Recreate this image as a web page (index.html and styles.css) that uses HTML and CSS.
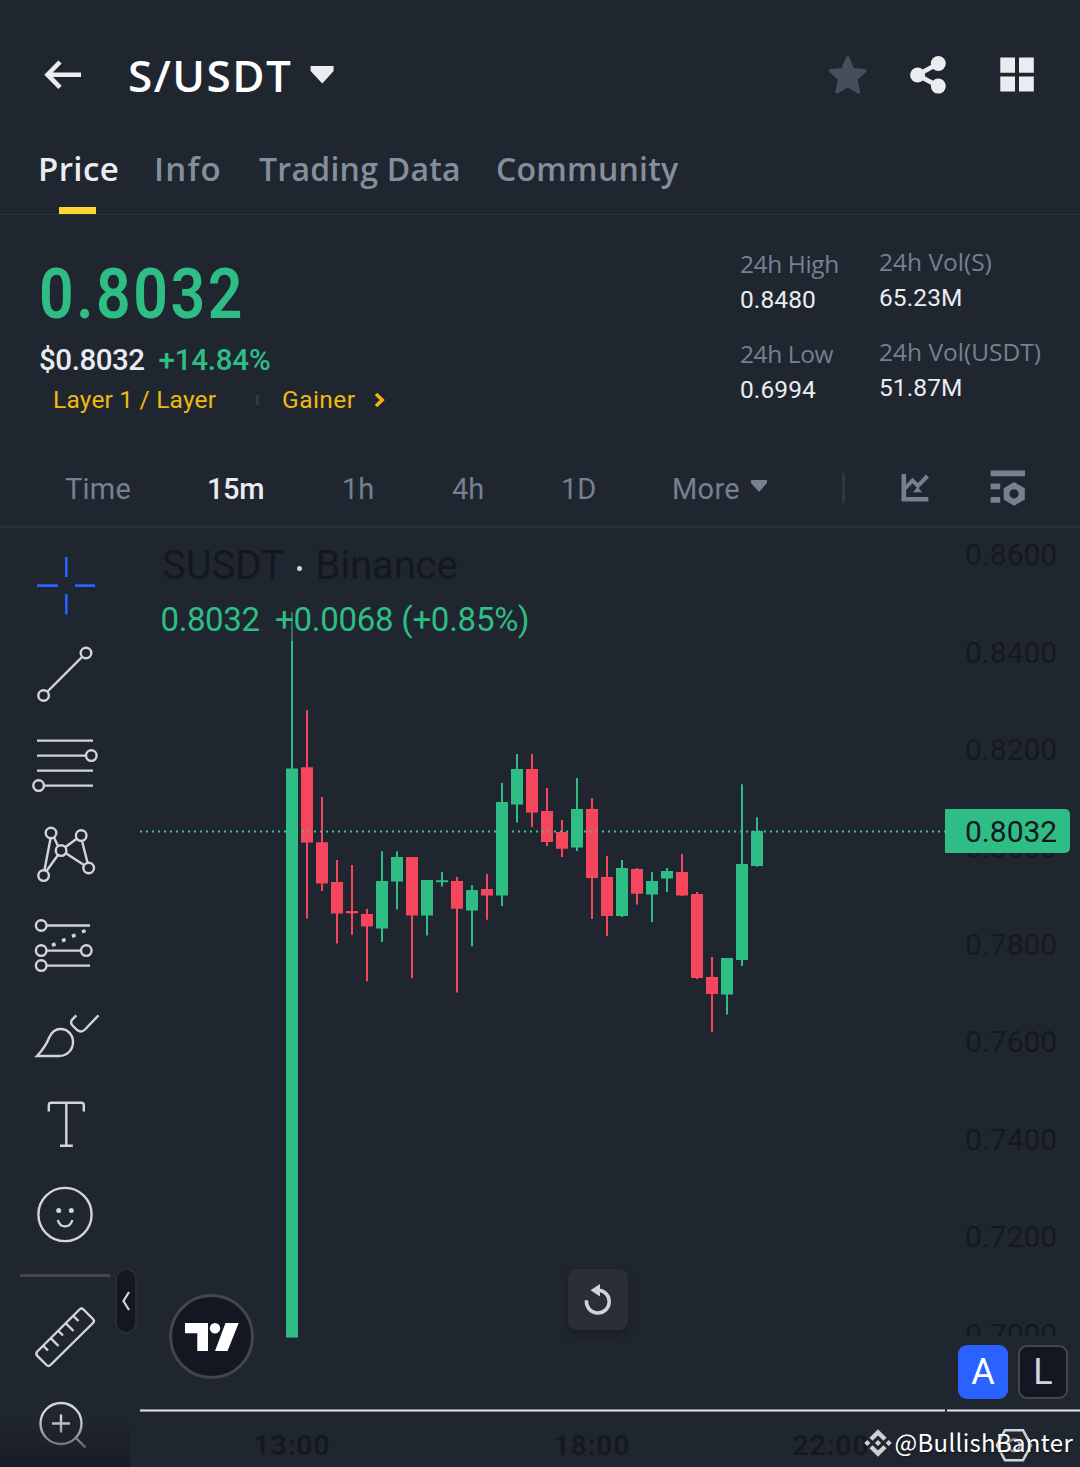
FILE: index.html
```html
<!DOCTYPE html>
<html lang="en">
<head>
<meta charset="utf-8">
<title>S/USDT</title>
<link rel="stylesheet" href="styles.css">
</head>
<body>
<main class="app">
  <header class="header">
    <svg class="back" width="38" height="32" viewBox="44 59 38 32"><path d="M81 74.7H48M60 62 47.5 74.7 60 87.4" fill="none" stroke="#eaecef" stroke-width="4.6"/></svg>
    <h1 class="pair">S/USDT</h1>
    <svg class="pair-caret" width="24" height="20" viewBox="310 64.5 24 20"><path d="M310.600 65.500H333.600V70.500L322.300 83 310.600 70.500Z" fill="#eaecef"/></svg>
    <svg class="star" width="40" height="40" viewBox="828 55.500 40 40"><path d="M847.700 58.500 852.600 70.200 864.800 71.300 855.600 79.800 858.300 92.200 847.700 86 837.100 92.200 839.800 79.800 830.600 71.300 842.800 70.200Z" fill="#474d5a" stroke="#474d5a" stroke-width="3.600" stroke-linejoin="round"/></svg>
    <svg class="share" width="38" height="40" viewBox="909 54.500 38 40"><path d="M938.300 63 917.500 74.500 938.300 85.600" fill="none" stroke="#eaecef" stroke-width="4.600"/><g fill="#eaecef"><circle cx="917.600" cy="74.500" r="7.500"/><circle cx="938.300" cy="63" r="7.500"/><circle cx="938.300" cy="85.600" r="7.500"/></g></svg>
    <svg class="apps" width="34" height="36" viewBox="1000 57 34 36"><path d="M1000.300 57.400h14.700v15.400h-14.700zM1019 57.400h14.800v15.400H1019zM1000.300 76.400h14.700v15.200h-14.700zM1019 76.400h14.800v15.200H1019z" fill="#eaecef"/></svg>
  </header>

  <nav class="tabs">
    <span class="tab tab-active">Price</span>
    <span class="tab tab-info">Info</span>
    <span class="tab">Trading Data</span>
    <span class="tab">Community</span>
  </nav>

  <section class="summary">
    <div class="quote">
      <div class="last"><span class="last-value">0.8032</span></div>
      <div class="fiat"><span class="usd">$0.8032</span><span class="change">+14.84%</span></div>
      <div class="tags"><span class="tag">Layer 1 / Layer</span><i class="tag-sep"></i><span class="tag tag-gainer">Gainer</span><svg class="tag-arrow" width="11" height="16" viewBox="0 0 11 16"><path d="M2 2 8.300 8 2 14" fill="none" stroke="#f0b90b" stroke-width="3.400"/></svg></div>
    </div>
    <div class="stats">
      <div class="stat-col">
        <div class="label">24h High</div><div class="value">0.8480</div>
        <div class="label second">24h Low</div><div class="value">0.6994</div>
      </div>
      <div class="stat-col stat-col-vol">
        <div class="label">24h Vol(S)</div><div class="value">65.23M</div>
        <div class="label second">24h Vol(USDT)</div><div class="value">51.87M</div>
      </div>
    </div>
  </section>

  <nav class="intervals">
    <span class="iv-time">Time</span>
    <span class="iv-active">15m</span>
    <span>1h</span>
    <span>4h</span>
    <span>1D</span>
    <span class="iv-more">More<svg class="more-caret" width="18" height="14" viewBox="0 0 18 14"><path d="M1 1H17V4L9 13 1 4Z" fill="#76808f"/></svg></span>
    <i class="iv-sep"></i>
    <svg width="28" height="30" viewBox="901 473.500 28 30"><path d="M903.800 473.500V498.800H928.300" fill="none" stroke="#76808f" stroke-width="4.600"/><path d="M905 488 912.500 480 918 485.500 927.500 475.500" fill="none" stroke="#76808f" stroke-width="4"/><path d="M917.500 486 922 491.800H913Z" fill="#76808f"/></svg>
    <svg class="iv-settings" width="36" height="38" viewBox="990 470 36 38"><path d="M990.600 470.500h34.400v5.700h-34.400zM990.600 483.500h9.600v5.700h-9.600zM990.600 497h9.600v5.700h-9.600z" fill="#76808f"/><path fill-rule="evenodd" d="M1014 482 1024.800 488.200V499.500L1014 505.700 1003.700 499.500V488.200ZM1014 489.200a4.600 4.600 0 1 0 .1 0Z" fill="#76808f"/></svg>
  </nav>

  <section class="chart">
    <aside class="toolbar">
      <svg class="tool tool-on" viewBox="0 540 140 90"><path d="M66.300 557V577M66.300 594V614.500M37 585.600H58M75 585.600H95"/></svg>
      <svg class="tool" viewBox="0 630 140 90"><path d="M82 657 47.500 691.500"/><circle cx="86" cy="653" r="5.300"/><circle cx="43.600" cy="695.500" r="5.300"/></svg>
      <svg class="tool" viewBox="0 720 140 90"><path d="M37 740.600H93M37 755.600H85.500M37 770.600H93M44 785.600H93"/><circle cx="91.300" cy="755.600" r="5.300"/><circle cx="38.600" cy="785.600" r="5.300"/></svg>
      <svg class="tool" viewBox="0 810 140 90"><path d="M50.500 838.500 44.500 870M54 837.500 58 846M65.500 847 77 838.500M58 855 46.500 871M65.500 853 84 865M82 841 87.500 862.500"/><circle cx="51" cy="833" r="5.300"/><circle cx="81.200" cy="835.600" r="5.300"/><circle cx="61.100" cy="850.600" r="5.300"/><circle cx="43.600" cy="875.600" r="5.300"/><circle cx="88.700" cy="868" r="5.300"/></svg>
      <svg class="tool" viewBox="0 900 140 90"><path d="M47 925.500H90M47 950.600H80M47 965.600H90"/><path d="M52 945.400 55.500 943.900M62 940.900 65.500 939.400M72 936.400 75.500 934.900M82 932 85.500 930.500" stroke-width="3.400"/><circle cx="41.200" cy="925.500" r="5.300"/><circle cx="41.200" cy="950.600" r="5.300"/><circle cx="41.200" cy="965.600" r="5.300"/><circle cx="86.300" cy="950.600" r="5.300"/></svg>
      <svg class="tool" viewBox="0 990 140 90"><path d="M37 1056C44.500 1048 47 1043 49 1038 52 1031 56 1029 60.500 1029 68 1029 73 1035 73 1042 73 1050 67 1056 59 1056Z"/><path d="M76.300 1015.300 72 1019.800Q70 1022.500 72.500 1025.500L76.500 1029.500Q81 1033.500 85 1029.500L98.500 1015.300"/></svg>
      <svg class="tool" viewBox="0 1080 140 90"><path d="M48.800 1111.500V1105Q48.800 1102.800 51.500 1102.800H81Q83.800 1102.800 83.800 1105V1111.500M66.300 1103V1145.700M60 1145.700H72.800"/></svg>
      <svg class="tool" viewBox="0 1170 140 90"><circle cx="65" cy="1214.500" r="26.600"/><path d="M57.800 1220C60 1228.500 70 1228.500 72.400 1220"/><g class="solid"><circle cx="58.700" cy="1210.600" r="2.500"/><circle cx="71.300" cy="1210.600" r="2.500"/></g></svg>
      <i class="tool-rule"></i>
      <svg class="tool" viewBox="0 1292 140 90"><path d="M37.300 1351.500 79.500 1309.500Q81.500 1307.500 83.500 1309.500L93 1319Q95 1321 93 1323L50.500 1365Q48.500 1367 46.500 1365L37.300 1355.800Q35.300 1353.600 37.300 1351.500ZM43.500 1346 48 1350.500M51 1338.500 58.500 1346M58.500 1331 63 1335.500M66 1323.500 73.500 1331M73.500 1316 78.500 1321"/></svg>
      <svg class="tool tool-last" viewBox="0 1382 140 85"><circle cx="61" cy="1423.500" r="20.500"/><path d="M61 1414.500V1432.500M52 1423.500H70M76 1438 85.500 1447.500"/></svg>
      <i class="toolbar-fade"></i>
      <span class="collapse"><svg width="8" height="20" viewBox="0 0 8 20"><path d="M7 1 1.500 10 7 19" fill="none" stroke="#d1d4dc" stroke-width="2.200"/></svg></span>
    </aside>

    <div class="plot">
      <svg class="candles" width="805" height="881" viewBox="140 528 805 881">
        <path class="up wick faint" d="M292 612.500V641"/>
        <path class="up wick" d="M292 641V769M382 851.300V942M397 851.300V909.500M427 880V935.500M442 872V886.500M472 885V946.300M502 783V906M517 754V822.500M577 778V851M622 860V917M652 872V922M667 868V892M727 958V1014.500M742 784.200V966M757 817.300V866.700"/>
        <path class="down wick" d="M307 710.300V918.500M322 797V891M337 860V943.500M352 865V934.700M367 909V981.300M412 857V978.300M457 877V992.500M487 874V919.700M532 754V827M547 788V846M562 820V857M592 798V919M607 856V936M637 868V904.500M682 854V896M697 892V979M712 957V1032"/>
        <path class="up body" d="M292 768.400V1337.400M382 881V928.400M397 857V881.500M427 880V915.500M442 880.200V882.300M472 890V910.500M502 802V895.500M517 769V804.500M577 809V847.500M622 868V916M652 881V894.600M667 871V878.600M727 958V994.500M742 864V960M757 831V866"/>
        <path class="down body" d="M307 767.200V842.500M322 842.200V883.500M337 882V913.600M352 911V913.300M367 914V926.600M412 857V915.500M457 881V908.700M487 889V895.600M532 769V812.600M547 811V842M562 832V848.700M592 809V878M607 877V916M637 869V893.700M682 872V895.600M697 894V978M712 977V994"/>
        <path class="last-line" d="M140 831.400H945"/>
      </svg>
      <div class="legend">
        <div class="legend-title"><span>SUSDT</span><i class="legend-dot"></i><span>Binance</span></div>
        <div class="legend-values"><span class="legend-last">0.8032</span><span class="legend-diff">+0.0068 (+0.85%)</span></div>
      </div>
      <span class="tv-logo"><svg width="54" height="28" viewBox="185 1324 54 28"><path d="M185 1324H208V1352H197.300V1334.200H185ZM225.500 1324H238.700L227.500 1352H215Z" fill="#fff"/><circle cx="215" cy="1329.300" r="5.200" fill="#fff"/></svg></span>
      <span class="reset"><svg width="30" height="34" viewBox="583 1284 30 34"><path d="M586.500 1301.300A11.400 11.400 0 1 0 598 1291.200" fill="none" stroke="#d1d4dc" stroke-width="3.500"/><path d="M600 1285V1297.500L590.500 1291.200Z" fill="#d1d4dc"/></svg></span>
    </div>

    <div class="price-axis">
      <div class="ticks"><span>0.8600</span><span>0.8400</span><span>0.8200</span><span>0.8000</span><span>0.7800</span><span>0.7600</span><span>0.7400</span><span>0.7200</span><span>0.7000</span></div>
      <span class="last-tag">0.8032</span>
      <div class="scale-buttons"><span class="scale-auto">A</span><span class="scale-log">L</span></div>
    </div>

    <div class="time-axis"><span>13:00</span><span>18:00</span><span class="t22">22:00</span></div>
    <div class="axis-corner"><svg width="38" height="36" viewBox="995 1427 38 36"><path d="M1005 1430.200H1023L1031 1445.300 1023 1460.300H1005L997 1445.300Z" fill="none" stroke="#d1d4dc" stroke-width="2.600"/><circle cx="1014" cy="1445.300" r="5.800" fill="none" stroke="#9fa3ad" stroke-width="2.500"/></svg></div>
  </section>

  <div class="watermark">
    <svg width="28" height="28" viewBox="-14 -14 28 28"><path fill="#cfcfcf" d="M0-13.800 8.600-5.300 5.400-2.200 0-7.500-5.400-2.200-8.600-5.300ZM0 13.800 8.600 5.300 5.400 2.200 0 7.500-5.400 2.200-8.600 5.300ZM-10.700-3.100-7.600 0-10.700 3.100-13.800 0ZM10.700-3.100 13.800 0 10.700 3.100 7.600 0ZM0-3.100 3.100 0 0 3.100-3.100 0Z"/></svg>
    <span>@BullishBanter</span>
  </div>
</main>
</body>
</html>
```
FILE: styles.css
```css
* { box-sizing: border-box; }

body {
  margin: 0;
  background: #202630;
  font-family: Roboto, "Liberation Sans", sans-serif;
  color: #eaecef;
}

svg { display: block; flex: none; }

.app {
  position: relative;
  width: 1080px;
  height: 1467px;
  overflow: hidden;
  display: flex;
  flex-direction: column;
}

/* header */
.header {
  height: 149px;
  padding: 0 46px 0 44px;
  display: flex;
  align-items: center;
  flex: none;
}
.pair {
  margin: 0 0 0 46px;
  width: 182px;
  font: 600 44px/60px "Open Sans", sans-serif;
  letter-spacing: 1.5px;
  color: #fff;
}
.star { margin-left: auto; }
.share { margin-left: 41px; }
.apps { margin-left: 53px; }

/* tabs */
.tabs {
  height: 66px;
  padding-left: 38px;
  display: grid;
  grid-template-columns: 116px 105px 237px 1fr;
  border-bottom: 1px solid #2b313b;
  flex: none;
  font: 600 32px/40px "Open Sans", sans-serif;
  letter-spacing: 0.25px;
  color: #848e9c;
}
.tab-active {
  color: #eaecef;
  font-size: 33px;
  letter-spacing: 0.4px;
  display: flex;
  flex-direction: column;
}
.tab-active::after {
  content: "";
  width: 37px;
  height: 7px;
  margin: 18px 0 0 21px;
  background: #fcd535;
}
.tab-info { font-size: 33px; letter-spacing: 1.2px; }

/* price summary */
.summary {
  height: 237px;
  display: flex;
  flex: none;
}
.quote { width: 740px; padding: 43px 0 0 39px; }
.last {
  font-size: 71px;
  font-weight: 600;
  line-height: 72px;
  color: #2ebd85;
}
.last-value {
  display: inline-block;
  letter-spacing: 3px;
  transform: scaleX(0.855);
  transform-origin: left;
}
.fiat {
  margin-top: 10px;
  display: flex;
  font-size: 29.5px;
  font-weight: 500;
  line-height: 40px;
}
.usd { width: 119.5px; letter-spacing: -0.45px; }
.change { color: #2ebd85; letter-spacing: -0.2px; }
.tags {
  display: flex;
  align-items: center;
  padding-left: 14px;
  font-size: 24.5px;
  line-height: 39px;
  color: #f0b90b;
}
.tag { letter-spacing: 0.2px; width: 203px; }
.tag-sep { width: 3px; height: 10px; background: #323944; }
.tag-gainer { margin-left: 23px; width: 92px; letter-spacing: 0.45px; }

.stats { display: flex; }
.stat-col { width: 139px; padding-top: 31px; letter-spacing: -0.4px; }
.stat-col-vol { padding-top: 29px; width: 190px; letter-spacing: 0; white-space: nowrap; }
.label {
  font: 24.5px/36px "Open Sans", sans-serif;
  color: #76808f;
}
.second { margin-top: 18px; }
.value { font-size: 24.5px; line-height: 36px; letter-spacing: 0.1px; }

/* interval selector */
.intervals {
  height: 76px;
  display: grid;
  grid-template-columns: 142px 135px 110px 109px 111px 170px 59px 89px 36px;
  align-items: center;
  padding-left: 65px;
  border-bottom: 3px solid #262c38;
  flex: none;
  font-size: 29px;
  line-height: 40px;
  color: #76808f;
}
.iv-time { letter-spacing: 0.2px; }
.iv-active { color: #eaecef; font-weight: 500; letter-spacing: -0.4px; }
.iv-more { display: flex; align-items: center; gap: 10px; letter-spacing: 0.3px; }
.more-caret { margin-bottom: 5px; }
.iv-sep { width: 3px; height: 30px; margin-bottom: 2px; background: #2f3641; }

/* chart area */
.chart {
  height: 939px;
  display: grid;
  grid-template-columns: 140px 805px 135px;
  grid-template-rows: 881px 58px;
}

.toolbar {
  position: relative;
  grid-row: 1 / 3;
  padding-top: 12px;
  display: flex;
  flex-direction: column;
}
.tool {
  width: 140px;
  height: 90px;
  fill: none;
  stroke: #d1d4dc;
  stroke-width: 2.4;
}
.tool-on { stroke: #2962ff; stroke-width: 2.6; }
.tool-last { height: 85px; }
.solid { fill: #d1d4dc; stroke: none; }
.tool-rule {
  width: 90px;
  height: 3px;
  margin: 14px 0 15px 20px;
  background: #434651;
  flex: none;
}
.toolbar-fade {
  position: absolute;
  left: 0;
  bottom: 0;
  width: 130px;
  height: 50px;
  background: linear-gradient(rgba(23, 27, 38, 0), rgba(23, 27, 38, 0.95));
}
.collapse {
  position: absolute;
  left: 115px;
  top: 740px;
  width: 22px;
  height: 66px;
  display: flex;
  align-items: center;
  justify-content: center;
  border: 2px solid #282c38;
  border-radius: 11px;
  background: #131722;
}

.plot { position: relative; }
.wick { stroke-width: 2; }
.body { stroke-width: 12; }
.up { stroke: #2ebd85; }
.down { stroke: #f6465d; }
.faint { opacity: 0.55; }
.last-line {
  stroke: #3cbd8b;
  stroke-width: 2;
  stroke-dasharray: 2 4;
}

.legend {
  position: absolute;
  left: 22px;
  top: 13px;
}
.legend-title {
  display: flex;
  align-items: center;
  font-size: 40px;
  line-height: 50px;
  letter-spacing: -0.1px;
  color: #131722;
}
.legend-dot {
  width: 5px;
  height: 5px;
  margin: 5px 14px 0 12px;
  border-radius: 50%;
  background: #d1d4dc;
}
.legend-values {
  display: flex;
  margin-top: 4px;
  font-size: 33px;
  line-height: 50px;
  letter-spacing: -0.25px;
  color: #2ebd85;
}
.legend-last { width: 114.5px; letter-spacing: -0.4px; margin-left: -1.5px; }

.tv-logo {
  position: absolute;
  left: 29px;
  top: 766px;
  width: 85px;
  height: 85px;
  padding-top: 1px;
  display: flex;
  align-items: center;
  justify-content: center;
  border: 3px solid #434651;
  border-radius: 50%;
  background: #131722;
}
.reset {
  position: absolute;
  left: 428px;
  top: 741px;
  width: 60px;
  height: 61px;
  display: flex;
  align-items: center;
  justify-content: center;
  border-radius: 9px;
  background: #2a2e39;
  box-shadow: 0 5px 10px rgba(15, 18, 28, 0.45);
}

.price-axis {
  position: relative;
  font-size: 30px;
  line-height: 40px;
  color: #141823;
}
.ticks {
  height: 807.5px;
  padding: 7.4px 0 0 20px;
  overflow: hidden;
  display: flex;
  flex-direction: column;
  gap: 57.4px;
}
.ticks span { flex: none; }
.last-tag {
  position: absolute;
  left: 0;
  top: 281px;
  width: 125px;
  height: 44px;
  padding-left: 20px;
  line-height: 46px;
  border-radius: 0 5px 5px 0;
  background: #2ebd85;
  color: #131722;
}
.scale-buttons {
  display: flex;
  gap: 10px;
  margin-top: 9.5px;
  padding-left: 13px;
  font-size: 36px;
  line-height: 55px;
  text-align: center;
}
.scale-auto, .scale-log {
  width: 50px;
  height: 54px;
  border-radius: 9px;
}
.scale-auto { background: #2962ff; color: #fff; }
.scale-log {
  background: #131722;
  border: 2px solid #434651;
  color: #d1d4dc;
  line-height: 51px;
}

.time-axis, .axis-corner {
  background: linear-gradient(#8a8d97 1px, #dfe1e8 1px, #dfe1e8 2px, #8a8d97 2px) top / 100% 3px no-repeat;
}
.time-axis {
  display: flex;
  padding: 17px 0 0 113.5px;
  font-size: 28.5px;
  font-weight: 600;
  line-height: 40px;
  letter-spacing: 0.8px;
  color: #141823;
}
.time-axis span { width: 300px; flex: none; }
.time-axis .t22 { width: 80px; margin-left: -61px; }
.axis-corner { margin-left: 2px; padding: 18px 0 0 48px; }

.watermark {
  position: absolute;
  right: 7px;
  top: 1422px;
  display: flex;
  align-items: center;
  gap: 3px;
  font: 400 24px/40px "Noto Sans CJK SC", sans-serif;
  letter-spacing: 0.3px;
  color: #fff;
  text-shadow: 1px 1px 2px rgba(0, 0, 0, 0.5);
}
.watermark svg { margin-top: 2px; }
```
